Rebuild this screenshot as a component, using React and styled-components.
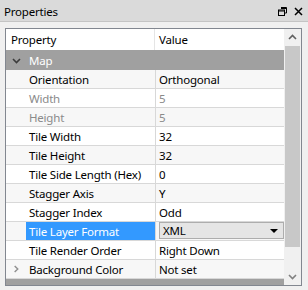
import React from "react";
import styled, { createGlobalStyle } from "styled-components";

const Global = createGlobalStyle`
  html, body { margin: 0; padding: 0; background: #f0f0f0; }
  body { font-family: "Noto Sans", "Open Sans", sans-serif; font-size: 11.5px; letter-spacing: -0.2px; }
`;

const Window = styled.div`
  width: 308px;
  height: 290px;
  display: flex;
  flex-direction: column;
  background: #f0f0f0;
  overflow: hidden;
`;

const TitleBar = styled.div`
  height: 20px;
  flex: none;
  display: flex;
  align-items: center;
  justify-content: space-between;
  background: #dadada;
  border-bottom: 1px solid #c4c4c4;
  padding: 1px 5px 0 4px;
`;

const Title = styled.span`
  color: #000;
`;

const TitleButtons = styled.div`
  display: flex;
  align-items: center;
  gap: 7px;
`;

const Body = styled.div`
  flex: 1;
  padding: 6px 6px 6px 5px;
  display: flex;
`;

const Frame = styled.div`
  flex: 1;
  border: 1px solid #828790;
  background: #fff;
  display: flex;
  overflow: hidden;
`;

const Main = styled.div`
  flex: 1;
  display: flex;
  flex-direction: column;
  overflow: hidden;
`;

const Header = styled.div`
  height: 21px;
  flex: none;
  display: flex;
  background: #fff;
`;

const HeaderCell = styled.div`
  width: ${(p) => p.$w}px;
  flex: ${(p) => (p.$w ? "none" : "1")};
  padding-left: ${(p) => p.$pad}px;
  display: flex;
  align-items: center;
  color: #000;
  border-right: ${(p) => (p.$sep ? "1px solid #e5e5e5" : "none")};
  box-sizing: border-box;
`;

const GroupRow = styled.div`
  height: ${(p) => p.$h}px;
  flex: none;
  display: flex;
  align-items: center;
  background: #a0a0a0;
  color: #fff;
`;

const Gutter = styled.div`
  width: 20px;
  flex: none;
  align-self: stretch;
  display: flex;
  align-items: center;
  justify-content: center;
`;

const GroupLabel = styled.span`
  padding-left: 3px;
`;

const Row = styled.div`
  height: 19px;
  flex: none;
  display: flex;
  box-sizing: border-box;
  border-bottom: 1px solid #d8d8d8;
  background: ${(p) => (p.$alt ? "#f7f7f7" : "#fff")};
`;

const NameCell = styled.div`
  width: 129px;
  flex: none;
  display: flex;
  align-items: center;
  padding-left: 3px;
  box-sizing: border-box;
  background: ${(p) => (p.$selected ? "#3399ff" : "transparent")};
  color: ${(p) => (p.$selected ? "#fff" : p.$disabled ? "#8a8a8a" : "#000")};
  white-space: nowrap;
`;

const ValueCell = styled.div`
  flex: 1;
  display: flex;
  align-items: center;
  padding-left: 3px;
  border-left: 1px solid #d8d8d8;
  color: ${(p) => (p.$disabled ? "#8a8a8a" : "#000")};
  white-space: nowrap;
`;

const Combo = styled.div`
  flex: 1;
  align-self: stretch;
  margin-bottom: 1px;
  display: flex;
  align-items: center;
  justify-content: space-between;
  background: #e5e5e5;
  border: 1px solid #adadad;
  padding: 0 5px 0 3px;
  color: #000;
`;

const ScrollBar = styled.div`
  width: 17px;
  flex: none;
  display: flex;
  flex-direction: column;
  background: #f0f0f0;
`;

const ScrollButton = styled.div`
  height: 17px;
  flex: none;
  display: flex;
  align-items: center;
  justify-content: center;
`;

const Thumb = styled.div`
  height: 201px;
  flex: none;
  margin: 0 1px;
  background: #c8c8c8;
`;

const Track = styled.div`
  flex: 1;
`;

const Chevron = ({ dir, color = "#606060", size = 9 }) => {
  const paths = {
    up: "M1 6 L4.5 2.5 L8 6",
    down: "M1 3 L4.5 6.5 L8 3",
    right: "M3 1 L6.5 4.5 L3 8",
  };
  return (
    <svg width={size} height={size} viewBox="0 0 9 9">
      <path d={paths[dir]} fill="none" stroke={color} strokeWidth="1.6" />
    </svg>
  );
};

const FloatIcon = () => (
  <svg width="9" height="9" viewBox="0 0 9 9">
    <path d="M3 0.5 H8.5 V6 H6.5" fill="none" stroke="#000" strokeWidth="1" />
    <path d="M3 1.5 H8" stroke="#000" strokeWidth="1" />
    <rect x="0.5" y="3" width="6" height="5.5" fill="none" stroke="#000" strokeWidth="1" />
    <path d="M0.5 4 H6.5" stroke="#000" strokeWidth="1" />
  </svg>
);

const CloseIcon = () => (
  <svg width="9" height="9" viewBox="0 0 9 9">
    <path d="M1 1 L8 8 M8 1 L1 8" stroke="#000" strokeWidth="1.5" />
  </svg>
);

const rows = [
  { name: "Orientation", value: "Orthogonal" },
  { name: "Width", value: "5", disabled: true },
  { name: "Height", value: "5", disabled: true },
  { name: "Tile Width", value: "32" },
  { name: "Tile Height", value: "32" },
  { name: "Tile Side Length (Hex)", value: "0" },
  { name: "Stagger Axis", value: "Y" },
  { name: "Stagger Index", value: "Odd" },
  { name: "Tile Layer Format", value: "XML", selected: true },
  { name: "Tile Render Order", value: "Right Down" },
  { name: "Background Color", value: "Not set", expandable: true },
];

export default function App() {
  return (
    <>
      <Global />
      <Window>
        <TitleBar>
          <Title>Properties</Title>
          <TitleButtons>
            <FloatIcon />
            <CloseIcon />
          </TitleButtons>
        </TitleBar>
        <Body>
          <Frame>
            <Main>
              <Header>
                <HeaderCell $w={149} $pad={5} $sep>
                  Property
                </HeaderCell>
                <HeaderCell $pad={4}>Value</HeaderCell>
              </Header>
              <GroupRow $h={20}>
                <Gutter>
                  <Chevron dir="down" color="#3c3c3c" />
                </Gutter>
                <GroupLabel>Map</GroupLabel>
              </GroupRow>
              {rows.map((r, i) => (
                <Row key={r.name} $alt={i % 2 === 0}>
                  <Gutter>
                    {r.expandable && <Chevron dir="right" color="#909090" size={8} />}
                  </Gutter>
                  <NameCell $selected={r.selected} $disabled={r.disabled}>
                    {r.name}
                  </NameCell>
                  <ValueCell $disabled={r.disabled}>
                    {r.selected ? (
                      <Combo>
                        <span>{r.value}</span>
                        <svg width="8" height="4" viewBox="0 0 8 4">
                          <path d="M0 0 H8 L4 4 Z" fill="#000" />
                        </svg>
                      </Combo>
                    ) : (
                      r.value
                    )}
                  </ValueCell>
                </Row>
              ))}
              <GroupRow $h={6} />
            </Main>
            <ScrollBar>
              <ScrollButton>
                <Chevron dir="up" />
              </ScrollButton>
              <Thumb />
              <Track />
              <ScrollButton>
                <Chevron dir="down" color="#808080" />
              </ScrollButton>
            </ScrollBar>
          </Frame>
        </Body>
      </Window>
    </>
  );
}
